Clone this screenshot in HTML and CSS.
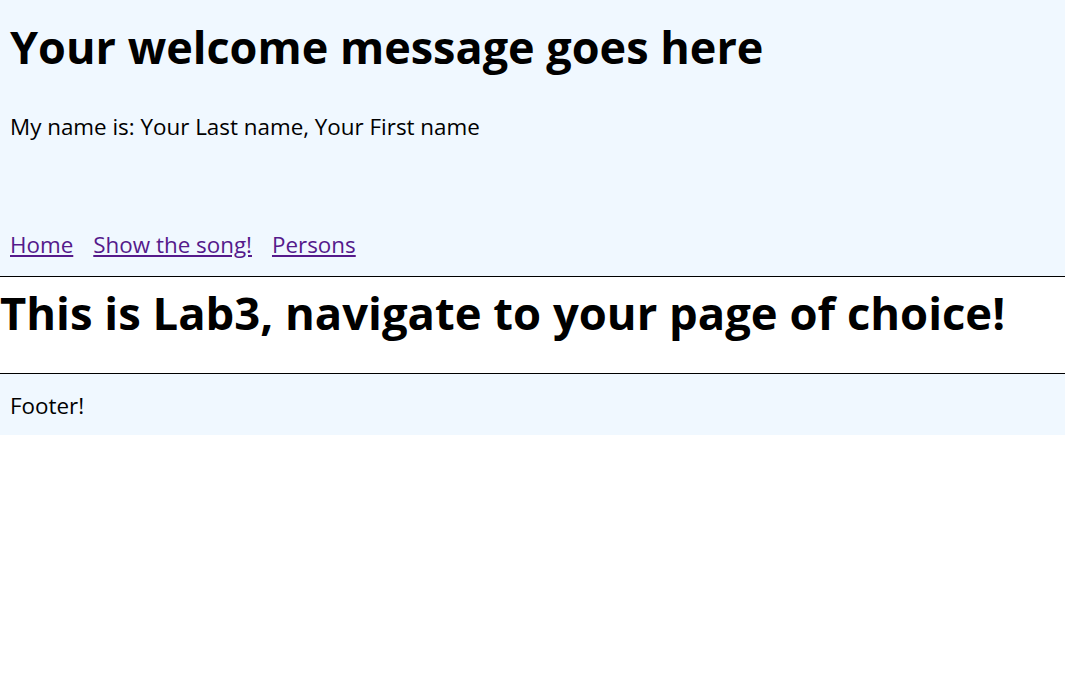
FILE: index.html
```html
<!DOCTYPE html>
<html lang="en">
<head>
<meta charset="utf-8">
<title>Lab3</title>
<link rel="stylesheet" href="styles.css">
</head>
<body>
<header class="site-header">
  <h1 class="title">Your welcome message goes here</h1>
  <p class="intro">My name is: Your Last name, Your First name</p>
  <nav class="nav">
    <a class="nav-link" href="#">Home</a>
    <a class="nav-link" href="#">Show the song!</a>
    <a class="nav-link" href="#">Persons</a>
  </nav>
</header>
<main class="content">
  <h1 class="lead">This is Lab3, navigate to your page of choice!</h1>
</main>
<footer class="site-footer">
  <p class="footer-text">Footer!</p>
</footer>
</body>
</html>
```

FILE: styles.css
```css
html, body {
  margin: 0;
  padding: 0;
  background: #ffffff;
}

body {
  font-family: "Open Sans", "Noto Sans", sans-serif;
  font-size: 22.4px;
  line-height: 30px;
  color: #000;
}

.site-header {
  background: #f0f8ff;
  padding: 17px 10px 16px;
  border-bottom: 1px solid #000;
  display: flex;
  flex-direction: column;
}

.title {
  margin: 0;
  font-size: 45px;
  line-height: 60px;
  font-weight: 700;
}

.intro {
  margin: 35px 0 0;
}

.nav {
  margin-top: 88px;
  display: flex;
  gap: 20px;
}

.nav-link {
  color: #551a8b;
  text-decoration: underline;
}

.content {
  padding: 5px 0 31px;
  border-bottom: 1px solid #000;
}

.lead {
  margin: 0;
  font-size: 45.4px;
  line-height: 60px;
  font-weight: 700;
}

.site-footer {
  background: #f0f8ff;
  padding: 17px 10px 14px;
}

.footer-text {
  margin: 0;
}
```
